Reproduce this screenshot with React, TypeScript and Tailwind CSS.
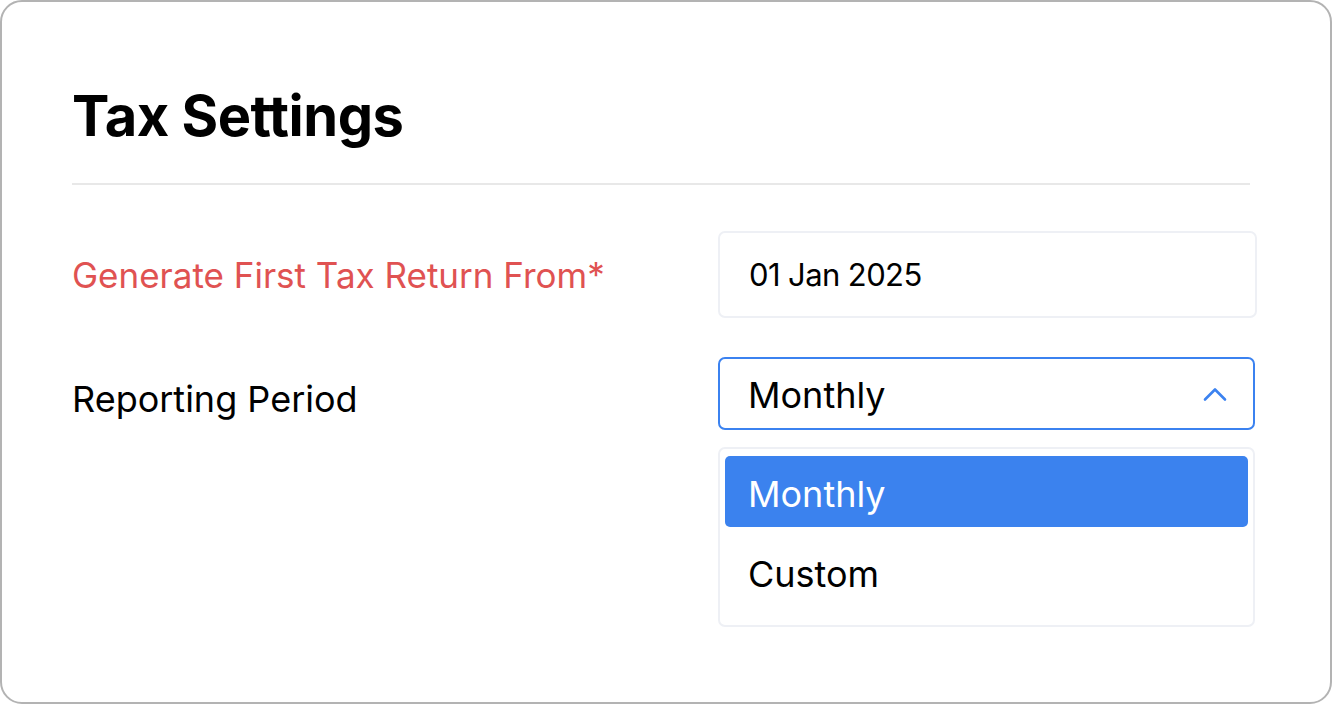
const font = { fontFamily: 'Inter, "Noto Sans", sans-serif' };

function Chevron() {
  return (
    <svg width="24" height="15" viewBox="0 0 24 15" fill="none">
      <polyline points="2,12.5 12,2.5 22,12.5" stroke="#3b82f0" strokeWidth="2.6" strokeLinecap="round" strokeLinejoin="round" />
    </svg>
  );
}

export default function App() {
  return (
    <div className="w-[1332px] h-[704px] bg-white" style={font}>
      <div className="w-full h-full border-2 border-[#b3b3b3] rounded-[22px] pl-[70px] pt-[78px]">
        {/* Header */}
        <h1 className="text-[56px] leading-[72px] font-bold text-black tracking-[-0.5px]">Tax Settings</h1>
        <div className="w-[1178px] h-[2px] bg-[#e8e8e8] mt-[31px]" />

        {/* First tax return */}
        <div className="flex items-center mt-[46px]">
          <div className="w-[646px] text-[35px] text-[#e05252] pt-[2px]">Generate First Tax Return From*</div>
          <div className="w-[539px] h-[87px] border-2 border-[#eef0f5] rounded-[7px] flex items-center pl-[29px] pt-[2px] text-[31px] tracking-[-0.6px] text-black">
            01 Jan 2025
          </div>
        </div>

        {/* Reporting period */}
        <div className="flex items-start mt-[39px]">
          <div className="w-[646px] h-[73px] flex items-center pt-[10px] text-[36px] text-black">Reporting Period</div>
          <div className="flex flex-col gap-[17px]">
            <div className="w-[537px] h-[73px] border-2 border-[#3b82f0] rounded-[7px] flex items-center justify-between pl-[28px] pr-[26px] pt-[2px] text-[36px] text-black">
              <span>Monthly</span>
              <Chevron />
            </div>
            <div className="w-[537px] h-[180px] border-2 border-[#eef0f5] rounded-[7px] px-[5px] pt-[7px]">
              <div className="h-[71px] bg-[#3b82ee] rounded-[5px] flex items-center pl-[23px] pt-[4px] text-[36px] text-white">Monthly</div>
              <div className="h-[80px] flex items-center pl-[23px] pt-[14px] text-[36px] text-black">Custom</div>
            </div>
          </div>
        </div>
      </div>
    </div>
  );
}
